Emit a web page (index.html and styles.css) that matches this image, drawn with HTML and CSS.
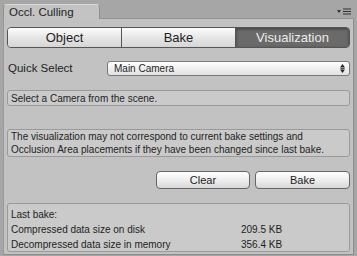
FILE: index.html
```html
<!DOCTYPE html>
<html lang="en">
<head>
<meta charset="UTF-8">
<title>Occl. Culling</title>
<link rel="stylesheet" href="styles.css">
</head>
<body>
<div class="win">
  <div class="tabs">
    <div class="tab">Occl. Culling</div>
    <svg class="menu" width="14" height="7" viewBox="0 0 14 7">
      <path d="M0 2h4L2 5z" fill="#333"/>
      <path d="M6 1h8M6 3.5h8M6 6h8" stroke="#333" stroke-width="1"/>
    </svg>
  </div>

  <div class="panel">
    <div class="toolbar">
      <div class="seg">Object</div>
      <div class="seg">Bake</div>
      <div class="seg on">Visualization</div>
    </div>

    <div class="field">
      <div class="label">Quick Select</div>
      <div class="popup">
        Main Camera
        <svg class="arrows" width="5" height="9" viewBox="0 0 5 9">
          <path d="M2.5 0L5 3.5H0z M2.5 9L5 5.5H0z" fill="#222"/>
          <path d="M0.5 4.5h4" stroke="#222" stroke-width="0.8"/>
        </svg>
      </div>
    </div>

    <div class="help one">Select a Camera from the scene.</div>

    <div class="help two">The visualization may not correspond to current bake settings and<br>Occlusion Area placements if they have been changed since last bake.</div>

    <div class="actions">
      <div class="btn">Clear</div>
      <div class="btn">Bake</div>
    </div>

    <div class="help stats">
      <div class="row">Last bake:</div>
      <div class="row"><span class="k">Compressed data size on disk</span><span>209.5 KB</span></div>
      <div class="row"><span class="k">Decompressed data size in memory</span><span>356.4 KB</span></div>
    </div>
  </div>
</div>
</body>
</html>
```

FILE: styles.css
```css
*{box-sizing:border-box;margin:0;padding:0}
body{background:#a6a6a6;font-family:"Liberation Sans",Arial,sans-serif;color:#1e1e1e;width:357px;height:256px;overflow:hidden}
.win{padding-top:3px}
.tabs{display:flex;align-items:flex-end;justify-content:space-between;height:15px;padding-left:3px;padding-right:6px}
.tab{width:97px;height:15px;background:#c3c3c3;border:1px solid #909090;border-bottom:none;border-top-color:#d8d8d8;border-radius:4px 4px 0 0;font-size:11.5px;line-height:14px;padding-left:5px;position:relative;top:1px;z-index:1}
.menu{margin-bottom:3px}
.panel{margin-left:3px;width:351px;height:237px;background:#c2c2c2;border:1px solid #8c8c8c;border-top-color:#939393;border-left-color:#999;padding:8px 3px 0 3px}
.toolbar{display:flex;height:21px;border:1px solid #555;border-radius:4px;overflow:hidden}
.seg{flex:1;text-align:center;font-size:13px;line-height:19px;background:linear-gradient(#fdfdfd,#e6e6e6 50%,#d6d6d6);border-left:1px solid #555}
.seg:first-child{border-left:none}
.seg.on{background:#6a6a6a;color:#ececec;box-shadow:inset 0 1px 3px #3a3a3a}
.field{display:flex;align-items:center;margin-top:13px;height:14px}
.label{width:100px;font-size:11.5px;padding-left:1px}
.popup{flex:1;height:15px;border:1px solid #7a7a7a;border-radius:3px;background:linear-gradient(#ffffff,#ededed 60%,#e0e0e0);font-size:10px;line-height:13px;padding-left:6px;position:relative}
.arrows{position:absolute;right:4px;top:2px}
.help{background:#cacaca;border:1px solid #9a9a9a;border-radius:3px;font-size:10px;line-height:13px;padding:0 3px}
.one{margin-top:15px;height:16px;padding-top:1px}
.two{margin-top:23px;height:28px;padding-top:0}
.actions{display:flex;justify-content:flex-end;gap:5px;margin-top:14px}
.btn{width:94px;height:18px;border:1px solid #666;border-radius:4px;background:linear-gradient(#ffffff,#ececec 55%,#d8d8d8);text-align:center;font-size:11px;line-height:16px}
.btn:last-child{width:95px}
.stats{margin-top:14px;height:49px;padding-top:3px;line-height:15px}
.row{display:flex}
.k{width:230px}
```
